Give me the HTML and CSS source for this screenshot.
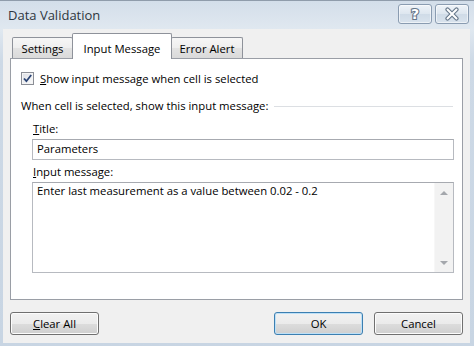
FILE: index.html
```html
<!DOCTYPE html>
<html lang="en">
<head>
  <meta charset="UTF-8">
  <meta name="viewport" content="width=device-width, initial-scale=1.0">
  <title>Data Validation</title>
  <link rel="stylesheet" href="styles.css">
</head>
<body>
  <div class="window">
    <div class="titlebar">
      <span class="title">Data Validation</span>
      <div class="caption-buttons">
        <button class="cap-btn" title="Help">
          <svg width="14" height="16" viewBox="0 0 14 16">
            <text x="7" y="13" text-anchor="middle" class="cap-glyph">?</text>
          </svg>
        </button>
        <button class="cap-btn" title="Close">
          <svg width="16" height="14" viewBox="0 0 16 14">
            <path d="M3.5 2.5 L12.5 11.5 M12.5 2.5 L3.5 11.5" stroke="#66778a" stroke-width="4.2" stroke-linecap="round"/>
            <path d="M3.5 2.5 L12.5 11.5 M12.5 2.5 L3.5 11.5" stroke="#fff" stroke-width="2" stroke-linecap="round"/>
          </svg>
        </button>
      </div>
    </div>

    <div class="client">
      <div class="tabs">
        <div class="tab">Settings</div>
        <div class="tab active">Input Message</div>
        <div class="tab">Error Alert</div>
      </div>

      <div class="panel">
        <label class="check-row">
          <span class="checkbox">
            <svg width="11" height="11" viewBox="0 0 11 11">
              <path d="M2 5.5 L4.4 8.2 L9.2 2" fill="none" stroke="#2b4474" stroke-width="1.8"/>
            </svg>
          </span>
          <span><u>S</u>how input message when cell is selected</span>
        </label>

        <div class="group-title"><span>When cell is selected, show this input message:</span></div>

        <div class="field-label"><u>T</u>itle:</div>
        <div class="textbox">Parameters</div>

        <div class="field-label"><u>I</u>nput message:</div>
        <div class="memo">
          <div class="memo-text">Enter last measurement as a value between 0.02 - 0.2</div>
          <div class="scrollbar">
            <span class="arrow up"></span>
            <span class="arrow down"></span>
          </div>
        </div>
      </div>

      <div class="footer">
        <button class="btn"><u>C</u>lear All</button>
        <div class="spacer"></div>
        <button class="btn default">OK</button>
        <button class="btn">Cancel</button>
      </div>
    </div>
  </div>
</body>
</html>
```

FILE: styles.css
```css
body {
  margin: 0;
  padding: 0;
  font-family: "Open Sans", "Noto Sans", sans-serif;
  font-size: 11.3px;
  color: #000;
  background: #fff;
}

.window {
  width: 474px;
  height: 346px;
  box-sizing: border-box;
  display: flex;
  flex-direction: column;
  padding: 0 4px 3px 3px;
  border-top: 1px solid #8f9cab;
  background: linear-gradient(#d3deea, #e0e8f0 28px, #cdd9e6 60px, #c8d5e3);
}

/* title bar */
.titlebar {
  height: 28px;
  display: flex;
  justify-content: space-between;
  align-items: flex-start;
}

.title {
  font-size: 13px;
  line-height: 18px;
  padding: 5px 0 0 5px;
  color: #2e3640;
}

.caption-buttons {
  display: flex;
  gap: 3px;
  margin: 3px 1px 0 0;
}

.cap-btn {
  width: 34px;
  height: 20px;
  padding: 0;
  display: flex;
  align-items: center;
  justify-content: center;
  border: 1px solid #8a9cb1;
  border-radius: 3px;
  background: linear-gradient(#eef3f8, #dde6ef 50%, #cfdbe7 50%, #d9e3ed);
  box-shadow: inset 0 0 0 1px rgba(255, 255, 255, 0.55);
}

.cap-glyph {
  font-family: "DejaVu Sans", sans-serif;
  font-weight: bold;
  font-size: 14px;
  fill: #fff;
  stroke: #66778a;
  stroke-width: 2.2;
  paint-order: stroke;
}

/* client area */
.client {
  flex: 1;
  display: flex;
  flex-direction: column;
  background: #f0f0f0;
  padding: 4px 7px 8px 7px;
}

.tabs {
  height: 25px;
  display: flex;
  align-items: flex-end;
  padding-left: 2px;
}

.tab {
  height: 21px;
  box-sizing: border-box;
  padding-top: 3px;
  line-height: 15px;
  text-align: center;
  border: 1px solid #8e929a;
  border-bottom: none;
  border-radius: 2px 2px 0 0;
  background: linear-gradient(#f6f6f6, #eeeeee 50%, #e3e3e3 50%, #dadada);
}

.tab:nth-child(1) { width: 61px; }
.tab:nth-child(3) { width: 72px; margin-left: -1px; }

.tab.active {
  position: relative;
  z-index: 1;
  width: 100px;
  height: 26px;
  margin: 0 0 -1px -1px;
  padding-top: 7px;
  background: #fff;
}

.panel {
  height: 242px;
  box-sizing: border-box;
  border: 1px solid #9a9ea6;
  background: #fff;
  padding: 12px 8px 0 10px;
}

.check-row {
  display: flex;
  align-items: flex-start;
  line-height: 15px;
}

.checkbox {
  width: 13px;
  height: 13px;
  box-sizing: border-box;
  margin: 1px 6px 0 0;
  display: flex;
  align-items: center;
  justify-content: center;
  border: 1px solid #8b8e96;
  background: linear-gradient(135deg, #dcdee4, #fbfbfb);
  box-shadow: inset 0 0 0 1px #f4f4f4;
}

.group-title {
  display: flex;
  align-items: center;
  margin-top: 12px;
  line-height: 15px;
}

.group-title::after {
  content: "";
  flex: 1;
  height: 1px;
  margin: 1px 1px 0 6px;
  background: #dcdfe3;
}

.field-label {
  line-height: 15px;
  margin: 8px 0 0 12px;
}

.textbox + .field-label {
  margin-top: 4px;
}

.textbox {
  height: 21px;
  box-sizing: border-box;
  margin: 3px 0 0 11px;
  padding: 0 4px;
  line-height: 17px;
  border: 1px solid #b7bac0;
  border-top-color: #a7aab0;
}

.memo {
  height: 91px;
  box-sizing: border-box;
  margin: 3px 0 0 11px;
  display: flex;
  border: 1px solid #b7bac0;
  border-top-color: #a7aab0;
}

.memo-text {
  flex: 1;
  padding: 0 4px;
  line-height: 15px;
}

.scrollbar {
  width: 18px;
  display: flex;
  flex-direction: column;
  justify-content: space-between;
  align-items: center;
  background: #f2f2f2;
  border-left: 1px solid #f7f7f7;
}

.arrow {
  width: 0;
  height: 0;
  margin: 8px 0 7px;
  border-left: 4px solid transparent;
  border-right: 4px solid transparent;
}

.arrow.up { border-bottom: 4px solid #a4a7ac; }
.arrow.down { border-top: 4px solid #a4a7ac; }

/* bottom buttons */
.footer {
  display: flex;
  gap: 11px;
  margin-top: 12px;
}

.spacer {
  flex: 1;
}

.btn {
  width: 89px;
  height: 23px;
  padding: 0;
  font-family: inherit;
  font-size: inherit;
  line-height: 15px;
  color: #000;
  border: 1px solid #707070;
  border-radius: 3px;
  background: linear-gradient(#f2f2f2, #ebebeb 50%, #dddddd 50%, #cfcfcf);
  box-shadow: inset 0 0 0 1px #fcfcfc;
}

.btn.default {
  border-color: #3c7fb1;
  box-shadow: inset 0 0 0 1px #bde0f7;
}
```
